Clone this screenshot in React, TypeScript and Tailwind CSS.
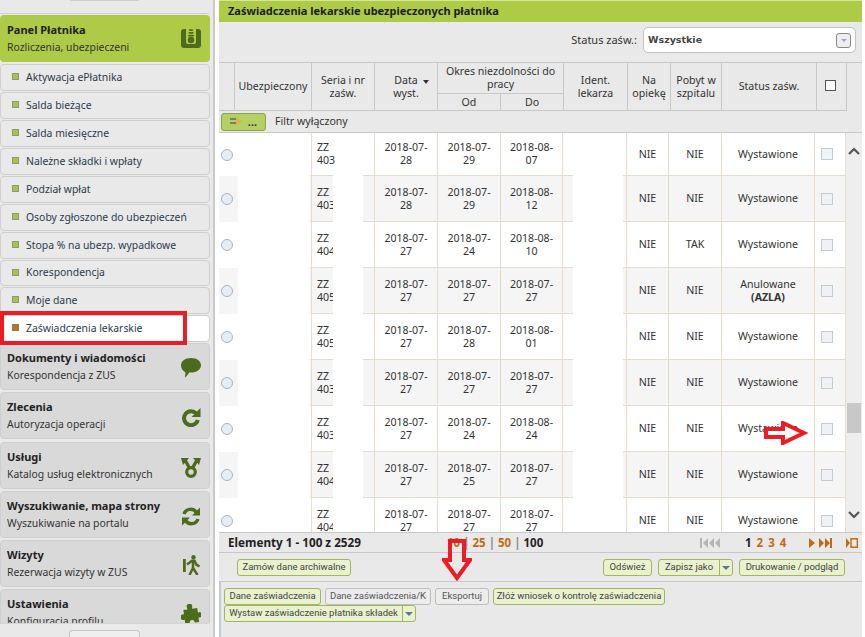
import React from "react";

const font = { fontFamily: '"Noto Sans", Tahoma, sans-serif' };

const subItems = ["Aktywacja ePłatnika","Salda bieżące","Salda miesięczne","Należne składki i wpłaty","Podział wpłat","Osoby zgłoszone do ubezpieczeń","Stopa % na ubezp. wypadkowe","Korespondencja"];

const G = "#4d6b1d";
const icons: Record<string, React.ReactNode> = {
  panel: <svg width="20" height="19" viewBox="0 0 20 19"><path d="M0 3a3 3 0 0 1 3-3h2v13a2 2 0 0 0 2 2h6a2 2 0 0 0 2-2V0h2a3 3 0 0 1 3 3v13a3 3 0 0 1-3 3H3a3 3 0 0 1-3-3z" fill={G}/><circle cx="10" cy="11" r="3.200" fill={G}/><rect x="7" y="5.800" width="6" height="1.800" rx=".9" fill={G}/><rect x="7.500" y="3" width="5" height="1.700" rx=".8" fill={G}/><rect x="8" y=".3" width="4" height="1.700" rx=".8" fill={G}/></svg>,
  chat: <svg width="20" height="20" viewBox="0 0 20 20"><path d="M10 0c5.500 0 10 2.800 10 7.200s-4.500 7.300-10 7.300c-.6 0-1.200 0-1.800-.1C7 16.500 5.500 18.500 3.500 19.500c.8-1.400 1-3.200.8-5.300C1.800 13 0 10.300 0 7.200 0 2.800 4.500 0 10 0z" fill={G}/></svg>,
  redo: <svg width="19" height="20" viewBox="0 0 19 20"><path d="M14.300 6.500A7 7 0 1 0 15.800 13" fill="none" stroke={G} strokeWidth="4"/><path d="M18.500 1v9h-9z" fill={G}/></svg>,
  usl: <svg width="20" height="21" viewBox="0 0 20 21"><path d="M4 3l4.500 8M16 3l-4.500 8" stroke={G} strokeWidth="3.400"/><path d="M0 1l8 0-6 7zM20 1l-8 0 6 7z" fill={G}/><circle cx="10" cy="15" r="4.300" fill="none" stroke={G} strokeWidth="3.200"/></svg>,
  sync: <svg width="20" height="21" viewBox="0 0 20 21"><path d="M15.500 6.500A7 7 0 0 0 3 8M4.500 14.500A7 7 0 0 0 17 13" fill="none" stroke={G} strokeWidth="3.400"/><path d="M19 1.500v8h-8zM1 19.500v-8h8z" fill={G}/></svg>,
  walk: <svg width="18" height="20" viewBox="0 0 18 20"><circle cx="10.500" cy="2.300" r="2.200" fill={G}/><path d="M0 4h2.800v13H0z" fill={G}/><path d="M4 9.500L9 5.800h2.500l2 4 3 1.500M10 6.500v6.500l4.500 7M10 13l-3.500 7" fill="none" stroke={G} strokeWidth="2.500"/></svg>,
  puzzle: <svg width="20" height="20" viewBox="0 0 20 20"><path d="M7 5V3.500a2.800 2.800 0 1 1 5 0V5h5v4.500h.3a2.700 2.700 0 1 1 0 5H17V19h-4.500v-.5a2.500 2.500 0 1 0-5 0v.5H3v-4.500a2.800 2.800 0 1 1 0-5V5z" fill={G} transform="rotate(-8 10 10)"/></svg>,
};

const sections = [
  ["Dokumenty i wiadomości","Korespondencja z ZUS","chat","mb-[2px]"],
  ["Zlecenia","Autoryzacja operacji","redo","mb-[3px]"],
  ["Usługi","Katalog usług elektronicznych","usl","mb-[2px]"],
  ["Wyszukiwanie, mapa strony","Wyszukiwanie na portalu","sync","mb-[2px]"],
  ["Wizyty","Rezerwacja wizyty w ZUS","walk","mb-[2px]"],
  ["Ustawienia","Konfiguracja profilu","puzzle","mb-[2px]"],
];

function Section({ t, s, i, mb }: { t: string; s: string; i: string; mb: string }) {
  return (
    <div className={`relative h-[47px] shrink-0 ${mb} rounded-[4px] border border-[#cfcfcf] bg-[#d9d9d9] pl-[6px] pt-[6px] mr-[3px]`}>
      <div className="text-[11px] font-bold leading-[16px] text-[#222]">{t}</div>
      <div className="text-[10.4px] leading-[16px] mt-[1px] text-[#333]">{s}</div>
      <div className="absolute right-[8px] top-[14px]">{icons[i]}</div>
    </div>
  );
}

function Sidebar() {
  return (
    <aside className="w-[215px] h-[637px] shrink-0 bg-[#e9e9e9] border-r-2 border-[#c9c9c9] flex flex-col overflow-hidden">
      <div className="h-[14px] shrink-0 border-b border-[#cfcfcf] mb-px flex justify-center mr-[4px]">
        <div className="w-[69px] h-[1px] bg-[#cfcfcf]" />
      </div>
      <div className="flex-1 min-h-0 overflow-hidden flex flex-col">
        <div className="relative h-[47px] shrink-0 rounded-[4px] bg-[#adcb47] pl-[7px] pt-[7px] mr-[3px] mb-[2px]">
          <div className="text-[11px] font-bold leading-[16px] text-[#222]">Panel Płatnika</div>
          <div className="text-[10.4px] leading-[16px] mt-[1px] text-[#333]">Rozliczenia, ubezpieczeni</div>
          <div className="absolute right-[9px] top-[14px]">{icons.panel}</div>
        </div>
        {subItems.map((x, i) => (
          <div key={x} className={`${i === 7 ? "h-[26px]" : "h-[27px]"} shrink-0 mb-px rounded-[4px] border border-[#cfcfcf] bg-[#e9e9e9] flex items-center pl-[11px] gap-[7px] mr-[3px] text-[10.4px] text-[#2c3a4a]`}>
            <span className="w-[7px] h-[7px] bg-[#a9c24f] border border-[#8a9a6a] -mt-[2px]" />
            {x}
          </div>
        ))}
        <div className="h-[27px] shrink-0 mb-px rounded-[4px] border border-[#cfcfcf] bg-[#e9e9e9] flex items-center pl-[11px] gap-[7px] mr-[3px] text-[10.4px] text-[#2c3a4a]">
          <span className="w-[7px] h-[7px] bg-[#a9c24f] border border-[#8a9a6a] -mt-[2px]" />
          Moje dane
        </div>
        <div className="h-[27px] shrink-0 mb-[1px] rounded-[4px] border border-[#cfcfcf] bg-white flex items-center pl-[11px] gap-[7px] mr-[3px] text-[10.4px] text-[#2c3a4a]">
          <span className="w-[7px] h-[7px] bg-[#c07020] border border-[#8a7a5a] -mt-[2px]" />
          Zaświadczenia lekarskie
        </div>
        {sections.map(([t, s, i, mb]) => <Section key={t} t={t} s={s} i={i} mb={mb} />)}
      </div>
      <div className="h-[14px] shrink-0 border-t border-[#d5d5d5] flex justify-center mr-[4px]">
        <div className="w-[71px] h-[8px] mt-[6px] rounded-t-[4px] border border-b-0 border-[#c4c4c4] bg-[#efefef]" />
      </div>
    </aside>
  );
}

const hcell = "border-r border-b border-[#c8c8c8] flex items-center justify-center text-center leading-[13px] px-[2px]";

function Header() {
  return (
    <div className="h-[49px] border-t border-[#c8c8c8] grid grid-cols-[16px_77px_63px_63px_63px_63px_64px_43px_51px_95px_30px_15px] grid-rows-[31px_17px] text-[10.6px] text-[#333]">
      <div className={`${hcell} row-span-2`} />
      <div className={`${hcell} row-span-2`}>Ubezpieczony</div>
      <div className={`${hcell} row-span-2`}>Seria i nr<br />zaśw.</div>
      <div className={`${hcell} row-span-2 relative`}>Data<br />wyst.<span className="absolute right-[8px] top-[17px] w-0 h-0 border-x-[3px] border-x-transparent border-t-[4px] border-t-[#333]" /></div>
      <div className={`${hcell} col-span-2`}>Okres niezdolności do pracy</div>
      <div className={`${hcell} row-span-2`}>Ident.<br />lekarza</div>
      <div className={`${hcell} row-span-2`}>Na<br />opiekę</div>
      <div className={`${hcell} row-span-2`}>Pobyt w<br />szpitalu</div>
      <div className={`${hcell} row-span-2`}>Status zaśw.</div>
      <div className={`${hcell} row-span-2 !pr-[4px]`}><span className="w-[11px] h-[11px] border border-[#555] bg-white -mt-[2px]" /></div>
      <div className="row-span-2" />
      <div className={hcell}>Od</div>
      <div className={hcell}>Do</div>
    </div>
  );
}

const rows = [
  ["403","2018-07-28","2018-07-29","2018-08-07","NIE","NIE","Wystawione"],
  ["403","2018-07-28","2018-07-29","2018-08-12","NIE","NIE","Wystawione"],
  ["404","2018-07-27","2018-07-24","2018-08-10","NIE","TAK","Wystawione"],
  ["405","2018-07-27","2018-07-27","2018-07-27","NIE","NIE","Anulowane"],
  ["405","2018-07-27","2018-07-28","2018-08-01","NIE","NIE","Wystawione"],
  ["403","2018-07-27","2018-07-27","2018-07-27","NIE","NIE","Wystawione"],
  ["403","2018-07-27","2018-07-24","2018-08-24","NIE","NIE","Wystawione"],
  ["404","2018-07-27","2018-07-25","2018-07-27","NIE","NIE","Wystawione"],
  ["404","2018-07-27","2018-07-27","2018-07-27","NIE","NIE","Wystawione"],
];

const cellB = "border-r border-b border-[#e8dccf] flex items-center justify-center text-center leading-[13px]";

function Row({ r, i }: { r: string[]; i: number }) {
  const d = (v: string) => <>{v.slice(0, 8)}<br />{v.slice(8)}</>;
  return (
    <div className={`grid grid-cols-[19px_74px_63px_63px_63px_62px_64px_42px_53px_93px_31px] shrink-0 ${i === 0 ? "h-[43px]" : "h-[46px]"} ${i % 2 ? "bg-[#f5f5f5]" : "bg-white"} text-[10.6px] text-[#333]`}>
      <div className="flex items-center pl-[2px]"><span className="w-[12px] h-[12px] rounded-full border border-[#a8b4c4] bg-[#e6edf3]" /></div>
      <div className="border-r border-b border-[#e8dccf]" />
      <div className={`${cellB} !justify-start pl-[5px] !text-left`}>ZZ<br />{r[0]}</div>
      <div className={cellB}>{d(r[1])}</div>
      <div className={cellB}>{d(r[2])}</div>
      <div className={cellB}>{d(r[3])}</div>
      <div className="border-r border-b border-[#e8dccf]" />
      <div className={cellB}>{r[4]}</div>
      <div className={cellB}>{r[5]}</div>
      <div className={cellB}>{r[6] === "Anulowane" ? <span>Anulowane<br /><b>(AZLA)</b></span> : r[6]}</div>
      <div className={`${cellB} pr-[7px]`}><span className="w-[12px] h-[12px] border border-[#c3cbd6] bg-[#eef2f7]" /></div>
    </div>
  );
}

function Btn({ children, gray, caret, w }: { children: React.ReactNode; gray?: boolean; caret?: boolean; w: string }) {
  return (
    <div className={`h-[17px] ${w} inline-flex items-center rounded-[3px] border text-[9.5px] whitespace-nowrap ${gray ? "border-[#bdbdbd] bg-[#ececec] text-[#555]" : "border-[#a4b560] bg-[#e9f1cf] text-[#444]"}`} style={{ fontFamily: 'Roboto, sans-serif' }}>
      <span className="flex-1 text-center">{children}</span>
      {caret && <span className="h-full w-[13px] border-l border-[#a4b560] flex items-center justify-center"><span className="w-0 h-0 border-x-[4px] border-x-transparent border-t-[4px] border-t-[#5b7a97]" /></span>}
    </div>
  );
}

function Main() {
  return (
    <main className="w-[643px] ml-[4px] h-[637px] shrink-0 bg-[#e9e9e9] flex flex-col relative">
      <div className="h-[22px] shrink-0 bg-[#adcb47] border-t border-[#d5e59a] pl-[9px] flex items-center text-[11px] font-bold text-[#1c1c1c]">Zaświadczenia lekarskie ubezpieczonych płatnika</div>
      <div className="h-[40px] shrink-0 flex items-center justify-end pr-[6px] pb-[4px] gap-[6px] text-[11px] text-[#333]">
        Status zaśw.:
        <div className="w-[213px] h-[26px] rounded-[5px] border border-[#c2c2c2] bg-white flex items-center justify-between pl-[4px] pr-[4px]">
          <b className="text-[9.5px] text-[#444] mt-[1px]" style={{ fontFamily: '"DejaVu Sans", sans-serif' }}>Wszystkie</b>
          <span className="w-[15px] h-[15px] rounded-[3px] border border-[#888] bg-[#eee] flex items-center justify-center"><span className="w-0 h-0 border-x-[3px] border-x-transparent border-t-[3px] border-t-[#9aa7c4]" /></span>
        </div>
      </div>
      <Header />
      <div className="h-[22px] shrink-0 border-b border-[#c8c8c8] flex items-center pl-[2px] text-[10.6px] text-[#333]">
        <div className="w-[45px] h-[18px] rounded-[3px] border border-[#8da24e] bg-[#b4cf62] flex items-center justify-center gap-[5px] text-[11px] font-bold leading-none">
          <svg width="13" height="9" viewBox="0 0 13 9"><path d="M0 2h6M0 6h6" stroke="#667" strokeWidth="1.500"/><path d="M6 1l6 3-6 4z" fill="#e0b040"/></svg>
          <span>...</span>
        </div>
        <span className="ml-[9px]">Filtr wyłączony</span>
      </div>
      <div className="relative h-[400px] shrink-0 flex overflow-hidden border-b border-[#c8c8c8]">
        <div className="w-[627px] flex flex-col overflow-hidden">
          {rows.map((r, i) => <Row key={i} r={r} i={i} />)}
        </div>
        <div className="w-[16px] bg-[#eeeeee] relative">
          <svg className="absolute left-[2px] top-[14px]" width="12" height="8" viewBox="0 0 12 8"><path d="M1 7l5-5 5 5" fill="none" stroke="#555" strokeWidth="2.200"/></svg>
          <div className="absolute left-[1px] right-[1px] top-[270px] h-[30px] bg-[#c8c8c8]" />
          <svg className="absolute left-[2px] top-[378px]" width="12" height="8" viewBox="0 0 12 8"><path d="M1 1l5 5 5-5" fill="none" stroke="#555" strokeWidth="2.200"/></svg>
        </div>
        <div className="absolute left-[19px] top-0 bottom-0 w-[72px] bg-white" />
        <div className="absolute left-[114px] top-[42px] bottom-0 w-[30px] bg-white" />
        <div className="absolute left-[354px] top-0 bottom-0 w-[50px] bg-white" />
      </div>
      <div className="h-[20px] shrink-0 border-b border-[#c8c8c8] flex items-center pl-[9px] text-[11.7px] relative text-[#222]">
        <b>Elementy 1 - 100 z 2529</b>
        <div className="absolute left-[228px] font-bold text-[11.5px]">
          <span className="text-[#c46a10]">10</span> <span className="text-[#888]">|</span> <span className="text-[#c46a10]">25</span> <span className="text-[#888]">|</span> <span className="text-[#c46a10]">50</span> <span className="text-[#888]">|</span> 100
        </div>
        <div className="absolute left-[481px]">
          <svg width="20" height="10" viewBox="0 0 20 10"><path d="M0 0h2v10H0zM8 0v10L3 5zM14 0v10L9 5zM20 0v10l-5-5z" fill="#b5b5b5"/></svg>
        </div>
        <div className="absolute left-[526px] font-bold tracking-[5px] text-[11.5px]"><span className="text-[#222]">1</span><span className="text-[#c46a10]">234</span></div>
        <div className="absolute left-[590px] top-[5px] flex gap-[4px]">
          <svg width="6" height="10" viewBox="0 0 6 10"><path d="M0 0l6 5-6 5z" fill="#c46a10"/></svg>
          <svg width="13" height="10" viewBox="0 0 13 10"><path d="M0 0l5 5-5 5zM6 0l5 5-5 5zM11 0h2v10h-2z" fill="#c46a10"/></svg>
        </div>
        <svg className="absolute left-[627px] top-[5px]" width="12" height="10" viewBox="0 0 12 10"><path d="M0 0l4 5-4 5z" fill="#c46a10"/><path d="M5 .7h6.300v8.600H5z" fill="none" stroke="#c46a10" strokeWidth="1.400"/></svg>
      </div>
      <div className="h-[29px] shrink-0 border-b border-[#c8c8c8] flex items-center pl-[18px] pr-[17px] justify-between pt-[1px]">
        <Btn w="w-[114px]">Zamów dane archiwalne</Btn>
        <div className="flex gap-[6px]">
          <Btn w="w-[49px]">Odśwież</Btn>
          <Btn w="w-[75px]" caret>Zapisz jako</Btn>
          <Btn w="w-[106px]">Drukowanie / podgląd</Btn>
        </div>
      </div>
      <div className="flex-1 border-l-2 border-[#c0c8d8] pl-[3px] pt-[6px] flex flex-col items-start">
        <div className="flex gap-[4px]">
          <Btn w="w-[97px]">Dane zaświadczenia</Btn>
          <Btn w="w-[106px]" gray>Dane zaświadczenia/K</Btn>
          <Btn w="w-[54px]" gray>Eksportuj</Btn>
          <Btn w="w-[172px]">Złóż wniosek o kontrolę zaświadczenia</Btn>
        </div>
        <Btn w="w-[192px]" caret>Wystaw zaświadczenie płatnika składek</Btn>
      </div>
    </main>
  );
}

export default function App() {
  return (
    <div className="relative flex w-[865px] h-[637px] overflow-hidden bg-white" style={font}>
      <Sidebar />
      <Main />
      <div className="absolute left-0 top-[311px] w-[187px] h-[34px] border-[4px] border-[#ed1c24]" />
      <svg className="absolute left-[764px] top-[421px]" width="44" height="24" viewBox="0 0 44 24"><path d="M2 8h17V2l21 10-21 10v-6H2z" fill="#fff" stroke="#ed1c24" strokeWidth="4"/></svg>
      <svg className="absolute left-[442px] top-[539px]" width="30" height="42" viewBox="0 0 30 42"><path d="M8 2h14v19h6L15 39 2 21h6z" fill="none" stroke="#ed1c24" strokeWidth="4"/></svg>
    </div>
  );
}
